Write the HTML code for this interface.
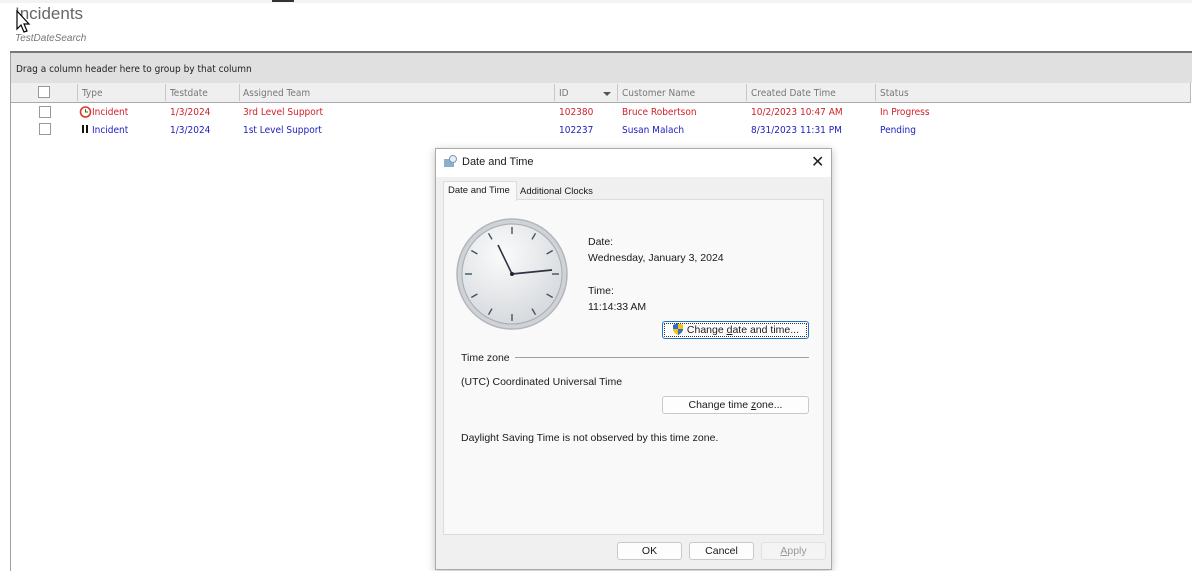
<!DOCTYPE html>
<html><head><style>
body{margin:0;width:1192px;height:571px;background:#fff;position:relative;overflow:hidden;font-family:Tahoma,"DejaVu Sans Condensed","Liberation Sans",sans-serif;}
.a{position:absolute;white-space:nowrap}
.g{font-size:10px;font-family:"DejaVu Sans Condensed","Liberation Sans",sans-serif}
.hd{color:#777}
.r{color:#d0202a}.b{color:#2020c0}
.cb{position:absolute;width:10px;height:10px;border:1px solid #999;background:#fff}
.sep{position:absolute;top:84px;width:1px;height:17px;background:#c8c8c8}
.d{font-family:"Liberation Sans",sans-serif;font-size:10.5px;color:#1a1a1a}
.btn{position:absolute;background:#fdfdfd;border:1px solid #c9c9c9;border-radius:3px;text-align:center;font-family:"Liberation Sans",sans-serif;font-size:10.5px;line-height:16px;color:#1a1a1a}
</style></head><body>
<div class="a" style="left:0;top:0;width:1192px;height:3px;background:#f3f3f3"></div>
<div class="a" style="left:272px;top:0;width:22px;height:2px;background:#333"></div>
<div class="a" style="left:15px;top:4px;font-size:17px;color:#666;font-family:'Liberation Sans',sans-serif">Incidents</div>
<div class="a" style="left:15px;top:33px;font-size:10px;color:#777;font-style:italic;font-family:'Liberation Sans',sans-serif">TestDateSearch</div>
<svg class="a" style="left:16px;top:10px" width="16" height="24"><path d="M1 1 L1 19 L5 15 L8 22 L11 21 L8 14 L13 14 Z" fill="#fff" stroke="#000" stroke-width="1.2"/></svg>
<div class="a" style="left:10px;top:52px;width:1182px;height:519px;border-left:1px solid #a0a0a0"></div>
<div class="a" style="left:10px;top:51px;width:1182px;height:2px;background:#777"></div>
<div class="a" style="left:11px;top:53px;width:1181px;height:30px;background:#e0e0e0"></div>
<div class="a g" style="left:16px;top:64px;color:#222">Drag a column header here to group by that column</div>
<div class="a" style="left:11px;top:83px;width:1179px;height:19px;background:#efefef;border-right:1px solid #bbb;border-bottom:1px solid #aaa"></div>
<div class="cb" style="left:38px;top:86px"></div>
<div class="sep" style="left:77px"></div><div class="sep" style="left:165px"></div><div class="sep" style="left:239px"></div><div class="sep" style="left:554px"></div><div class="sep" style="left:617px"></div><div class="sep" style="left:746px"></div><div class="sep" style="left:875px"></div>
<div class="a g hd" style="left:82px;top:88px">Type</div>
<div class="a g hd" style="left:170px;top:88px">Testdate</div>
<div class="a g hd" style="left:243px;top:88px">Assigned Team</div>
<div class="a g hd" style="left:559px;top:88px">ID</div>
<div class="a" style="left:603px;top:92px;width:0;height:0;border-left:4px solid transparent;border-right:4px solid transparent;border-top:4px solid #555"></div>
<div class="a g hd" style="left:622px;top:88px">Customer Name</div>
<div class="a g hd" style="left:751px;top:88px">Created Date Time</div>
<div class="a g hd" style="left:880px;top:88px">Status</div>
<div class="cb" style="left:39px;top:106px"></div>
<div class="cb" style="left:39px;top:123px"></div>
<svg class="a" style="left:79px;top:105px" width="13" height="13"><circle cx="6.5" cy="7" r="5" fill="#fff" stroke="#d04020" stroke-width="1.6"/><path d="M6.5 4V7H9" stroke="#555" fill="none"/></svg>
<div class="a" style="left:82px;top:125px;width:2px;height:8px;background:#111"></div><div class="a" style="left:86px;top:125px;width:2px;height:8px;background:#111"></div>
<div class="a g r" style="left:92px;top:107px">Incident</div>
<div class="a g b" style="left:92px;top:125px">Incident</div>
<div class="a g r" style="left:170px;top:107px">1/3/2024</div>
<div class="a g b" style="left:170px;top:125px">1/3/2024</div>
<div class="a g r" style="left:243px;top:107px">3rd Level Support</div>
<div class="a g b" style="left:243px;top:125px">1st Level Support</div>
<div class="a g r" style="left:559px;top:107px">102380</div>
<div class="a g b" style="left:559px;top:125px">102237</div>
<div class="a g r" style="left:622px;top:107px">Bruce Robertson</div>
<div class="a g b" style="left:622px;top:125px">Susan Malach</div>
<div class="a g r" style="left:751px;top:107px">10/2/2023 10:47 AM</div>
<div class="a g b" style="left:751px;top:125px">8/31/2023 11:31 PM</div>
<div class="a g r" style="left:880px;top:107px">In Progress</div>
<div class="a g b" style="left:880px;top:125px">Pending</div>

<div class="a" style="left:435px;top:148px;width:395px;height:420px;background:#f0f0f0;border:1px solid #aaa;box-shadow:0 2px 8px rgba(0,0,0,.25)"></div>
<div class="a" style="left:436px;top:149px;width:395px;height:28px;background:#fff"></div>
<svg class="a" style="left:443px;top:154px" width="14" height="14"><rect x="1" y="5" width="10" height="8" fill="#8ab0d0"/><circle cx="10" cy="5" r="3.5" fill="#e8eef4" stroke="#7a9ab8"/></svg>
<div class="a d" style="left:462px;top:156px;font-size:11px">Date and Time</div>
<div class="a" style="left:811px;top:152px;font-size:16px;color:#222;font-family:'Liberation Sans',sans-serif">✕</div>
<div class="a" style="left:443px;top:199px;width:379px;height:334px;background:#f9f9f9;border:1px solid #dcdcdc"></div>
<div class="a" style="left:443px;top:181px;width:72px;height:19px;background:#f9f9f9;border:1px solid #dcdcdc;border-bottom:none"></div>
<div class="a d" style="left:448px;top:185px;font-size:9.5px">Date and Time</div>
<div class="a d" style="left:520px;top:186px;font-size:9.5px">Additional Clocks</div>
<svg class="a" style="left:455px;top:217px" width="114" height="114" viewBox="0 0 114 114">
<defs><radialGradient id="f" cx="40%" cy="30%" r="75%"><stop offset="0" stop-color="#fbfbfb"/><stop offset="1" stop-color="#d4d8dc"/></radialGradient></defs>
<circle cx="57" cy="57" r="55" fill="#cfd2d6" stroke="#b3b6ba" stroke-width="1.5"/>
<circle cx="57" cy="57" r="50" fill="url(#f)" stroke="#a8acb0"/>
<g stroke="#3c5566" stroke-width="1.4">
<line x1="57" y1="10" x2="57" y2="17"/><line x1="57" y1="97" x2="57" y2="104"/><line x1="10" y1="57" x2="17" y2="57"/><line x1="97" y1="57" x2="104" y2="57"/>
<line x1="80.5" y1="16.3" x2="77" y2="22.4"/><line x1="97.7" y1="33.5" x2="91.6" y2="37"/><line x1="97.7" y1="80.5" x2="91.6" y2="77"/><line x1="80.5" y1="97.7" x2="77" y2="91.6"/>
<line x1="33.5" y1="97.7" x2="37" y2="91.6"/><line x1="16.3" y1="80.5" x2="22.4" y2="77"/><line x1="16.3" y1="33.5" x2="22.4" y2="37"/><line x1="33.5" y1="16.3" x2="37" y2="22.4"/>
</g>
<line x1="57" y1="57" x2="43" y2="28" stroke="#334" stroke-width="1.6"/>
<line x1="57" y1="57" x2="97" y2="53" stroke="#334" stroke-width="1.8"/>
<circle cx="57" cy="57" r="2" fill="#223"/>
</svg>
<div class="a d" style="left:588px;top:236px">Date:</div>
<div class="a d" style="left:588px;top:252px">Wednesday, January 3, 2024</div>
<div class="a d" style="left:588px;top:285px">Time:</div>
<div class="a d" style="left:588px;top:301px">11:14:33 AM</div>
<div class="btn" style="left:662px;top:321px;width:145px;height:16px;border:1px solid #1a73c8;outline:1px dotted #333;outline-offset:-3px">
<svg style="vertical-align:-2px" width="12" height="12"><path d="M6 0L11 2V6C11 9 8 11 6 12C4 11 1 9 1 6V2Z" fill="#f4c20d"/><path d="M6 0V6H1V2ZM6 6H11C11 9 8 11 6 12Z" fill="#2a6fcf"/></svg> Change <u>d</u>ate and time...</div>
<div class="a d" style="left:461px;top:352px">Time zone</div>
<div class="a" style="left:515px;top:357px;width:294px;height:1px;background:#a0a0a0"></div>
<div class="a d" style="left:461px;top:376px">(UTC) Coordinated Universal Time</div>
<div class="btn" style="left:662px;top:396px;width:145px;height:16px">Change time <u>z</u>one...</div>
<div class="a d" style="left:461px;top:432px">Daylight Saving Time is not observed by this time zone.</div>
<div class="btn" style="left:617px;top:542px;width:63px;height:16px">OK</div>
<div class="btn" style="left:689px;top:542px;width:63px;height:16px">Cancel</div>
<div class="btn" style="left:761px;top:542px;width:63px;height:16px;background:#f4f4f4;border-color:#e0e0e0;color:#999"><u>A</u>pply</div>
</body></html>
